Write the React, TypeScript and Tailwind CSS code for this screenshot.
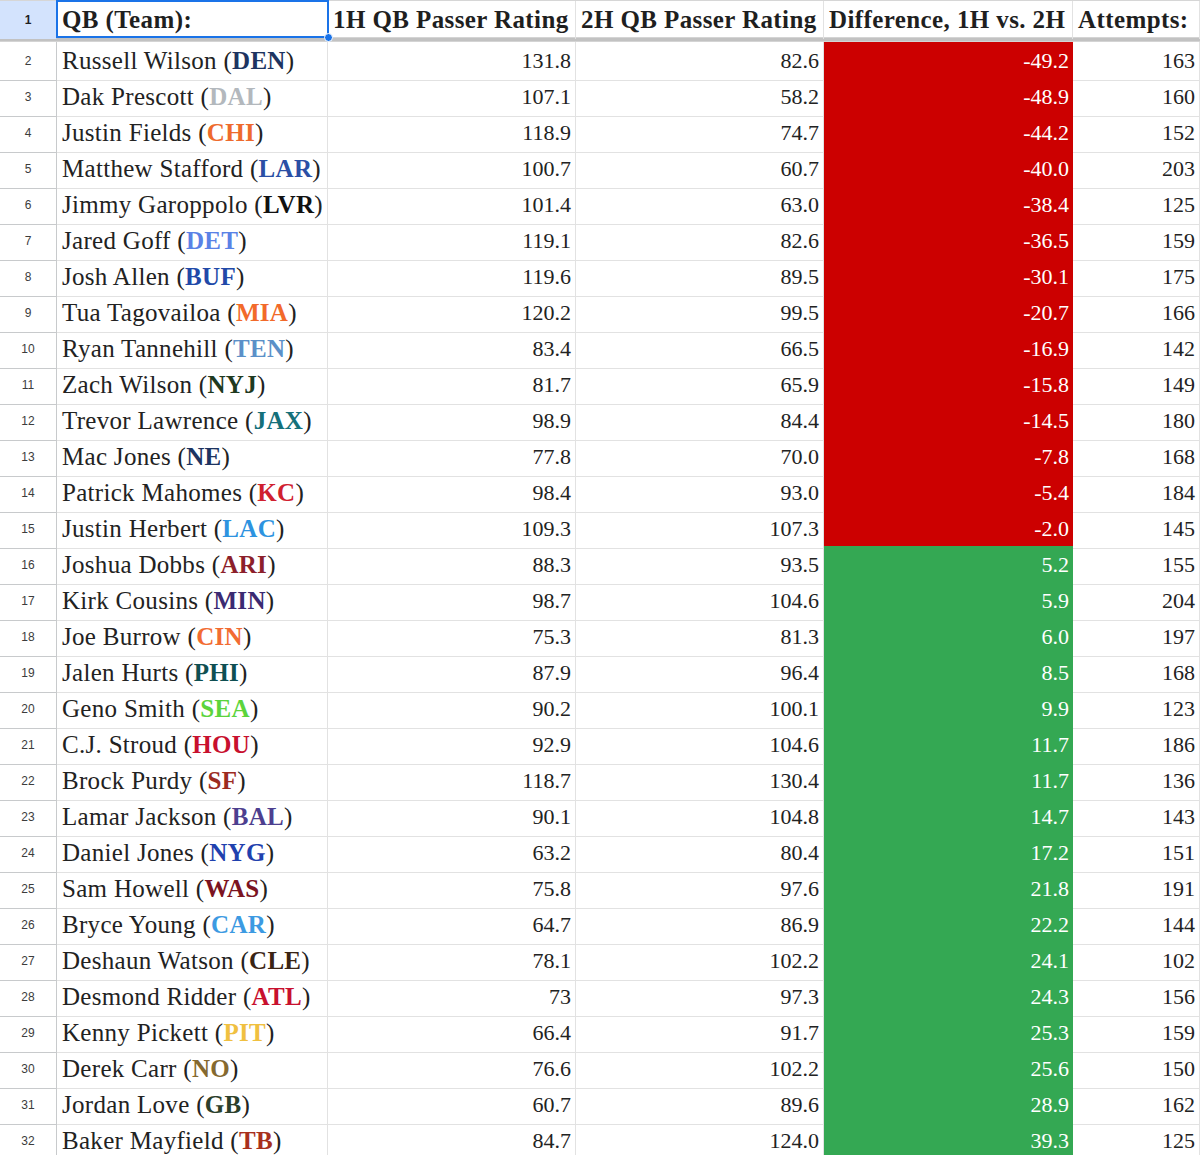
type Row = {
  name: string;
  team: string;
  color: string;
  h1: string;
  h2: string;
  diff: string;
  att: string;
};

const ROWS: Row[] = [
  { name: "Russell Wilson", team: "DEN", color: "text-[#1d3461]", h1: "131.8", h2: "82.6", diff: "-49.2", att: "163" },
  { name: "Dak Prescott", team: "DAL", color: "text-[#b3b8bd]", h1: "107.1", h2: "58.2", diff: "-48.9", att: "160" },
  { name: "Justin Fields", team: "CHI", color: "text-[#ee6a2c]", h1: "118.9", h2: "74.7", diff: "-44.2", att: "152" },
  { name: "Matthew Stafford", team: "LAR", color: "text-[#2a4fa5]", h1: "100.7", h2: "60.7", diff: "-40.0", att: "203" },
  { name: "Jimmy Garoppolo", team: "LVR", color: "text-[#111111]", h1: "101.4", h2: "63.0", diff: "-38.4", att: "125" },
  { name: "Jared Goff", team: "DET", color: "text-[#5a82e6]", h1: "119.1", h2: "82.6", diff: "-36.5", att: "159" },
  { name: "Josh Allen", team: "BUF", color: "text-[#2149a8]", h1: "119.6", h2: "89.5", diff: "-30.1", att: "175" },
  { name: "Tua Tagovailoa", team: "MIA", color: "text-[#f26a2a]", h1: "120.2", h2: "99.5", diff: "-20.7", att: "166" },
  { name: "Ryan Tannehill", team: "TEN", color: "text-[#5b90c8]", h1: "83.4", h2: "66.5", diff: "-16.9", att: "142" },
  { name: "Zach Wilson", team: "NYJ", color: "text-[#1f3a1f]", h1: "81.7", h2: "65.9", diff: "-15.8", att: "149" },
  { name: "Trevor Lawrence", team: "JAX", color: "text-[#14707a]", h1: "98.9", h2: "84.4", diff: "-14.5", att: "180" },
  { name: "Mac Jones", team: "NE", color: "text-[#1d3461]", h1: "77.8", h2: "70.0", diff: "-7.8", att: "168" },
  { name: "Patrick Mahomes", team: "KC", color: "text-[#d0202f]", h1: "98.4", h2: "93.0", diff: "-5.4", att: "184" },
  { name: "Justin Herbert", team: "LAC", color: "text-[#2d93e0]", h1: "109.3", h2: "107.3", diff: "-2.0", att: "145" },
  { name: "Joshua Dobbs", team: "ARI", color: "text-[#8c1f2b]", h1: "88.3", h2: "93.5", diff: "5.2", att: "155" },
  { name: "Kirk Cousins", team: "MIN", color: "text-[#3b2a72]", h1: "98.7", h2: "104.6", diff: "5.9", att: "204" },
  { name: "Joe Burrow", team: "CIN", color: "text-[#f26c32]", h1: "75.3", h2: "81.3", diff: "6.0", att: "197" },
  { name: "Jalen Hurts", team: "PHI", color: "text-[#0f4f52]", h1: "87.9", h2: "96.4", diff: "8.5", att: "168" },
  { name: "Geno Smith", team: "SEA", color: "text-[#5cd43c]", h1: "90.2", h2: "100.1", diff: "9.9", att: "123" },
  { name: "C.J. Stroud", team: "HOU", color: "text-[#c8102e]", h1: "92.9", h2: "104.6", diff: "11.7", att: "186" },
  { name: "Brock Purdy", team: "SF", color: "text-[#9c2b1f]", h1: "118.7", h2: "130.4", diff: "11.7", att: "136" },
  { name: "Lamar Jackson", team: "BAL", color: "text-[#4d3f8f]", h1: "90.1", h2: "104.8", diff: "14.7", att: "143" },
  { name: "Daniel Jones", team: "NYG", color: "text-[#1f41ae]", h1: "63.2", h2: "80.4", diff: "17.2", att: "151" },
  { name: "Sam Howell", team: "WAS", color: "text-[#7b1321]", h1: "75.8", h2: "97.6", diff: "21.8", att: "191" },
  { name: "Bryce Young", team: "CAR", color: "text-[#3c9ae2]", h1: "64.7", h2: "86.9", diff: "22.2", att: "144" },
  { name: "Deshaun Watson", team: "CLE", color: "text-[#3a2414]", h1: "78.1", h2: "102.2", diff: "24.1", att: "102" },
  { name: "Desmond Ridder", team: "ATL", color: "text-[#c8102e]", h1: "73", h2: "97.3", diff: "24.3", att: "156" },
  { name: "Kenny Pickett", team: "PIT", color: "text-[#f0c040]", h1: "66.4", h2: "91.7", diff: "25.3", att: "159" },
  { name: "Derek Carr", team: "NO", color: "text-[#85692f]", h1: "76.6", h2: "102.2", diff: "25.6", att: "150" },
  { name: "Jordan Love", team: "GB", color: "text-[#2b3f2b]", h1: "60.7", h2: "89.6", diff: "28.9", att: "162" },
  { name: "Baker Mayfield", team: "TB", color: "text-[#a8301c]", h1: "84.7", h2: "124.0", diff: "39.3", att: "125" },
];

const COLS = "grid grid-cols-[57px_271px_248px_248px_249px_127px]";

function RowNum({ n }: { n: number }) {
  return (
    <div className="flex items-center justify-center border-b border-r border-[#c8cacc] font-['Liberation_Sans',sans-serif] text-[12px] text-[#3c3c3c]">
      {n}
    </div>
  );
}

function Num({ v }: { v: string }) {
  return (
    <div className="flex items-center justify-end border-b border-r border-[#e2e2e2] pr-1 text-[22px]">
      {v}
    </div>
  );
}

function Head({ children }: { children: string }) {
  return (
    <div className="flex items-center whitespace-nowrap border-r border-[#e2e2e2] pl-[5px] text-[25px] font-bold tracking-[0.4px] text-[#1f1f1f]">
      {children}
    </div>
  );
}

export default function App() {
  return (
    <div className="relative h-[1155px] w-[1200px] overflow-hidden bg-white font-['Liberation_Serif',serif] text-[#222]">
      <div className={`${COLS} h-[37px] border-t border-[#d6d6d6]`}>
        <div className="flex items-center justify-center border-r border-[#c8cacc] bg-[#d3e3fd] font-['Liberation_Sans',sans-serif] text-[12px] font-bold text-[#1f1f1f]">
          1
        </div>
        <Head>QB (Team):</Head>
        <Head>1H QB Passer Rating</Head>
        <Head>2H QB Passer Rating</Head>
        <Head>Difference, 1H vs. 2H</Head>
        <Head>Attempts:</Head>
      </div>
      <div className="h-[5px] border-y border-[#d4d4d4] bg-[#c2c2c2]" />

      {ROWS.map((r, i) => {
        const neg = r.diff.startsWith("-");
        return (
          <div key={r.name} className={`${COLS} h-9`}>
            <RowNum n={i + 2} />
            <div className="flex items-center whitespace-nowrap border-b border-r border-[#e2e2e2] pl-[5px] text-[25px] tracking-[0.3px]">
              {r.name}&nbsp;(<span className={`font-bold ${r.color}`}>{r.team}</span>)
            </div>
            <Num v={r.h1} />
            <Num v={r.h2} />
            <div
              className={`flex items-center justify-end border-b pr-1 text-[22px] text-white ${
                neg ? "border-[#c10000] bg-[#cc0000]" : "border-[#2f9c4c] bg-[#34a853]"
              }`}
            >
              {r.diff}
            </div>
            <Num v={r.att} />
          </div>
        );
      })}

      {/* selected cell A1 */}
      <div className="pointer-events-none absolute left-[56px] top-0 h-[38px] w-[273px] border-2 border-[#1a73e8]" />
      <div className="absolute left-[324px] top-[33px] h-[9px] w-[9px] rounded-full border border-white bg-[#1a73e8]" />
    </div>
  );
}
